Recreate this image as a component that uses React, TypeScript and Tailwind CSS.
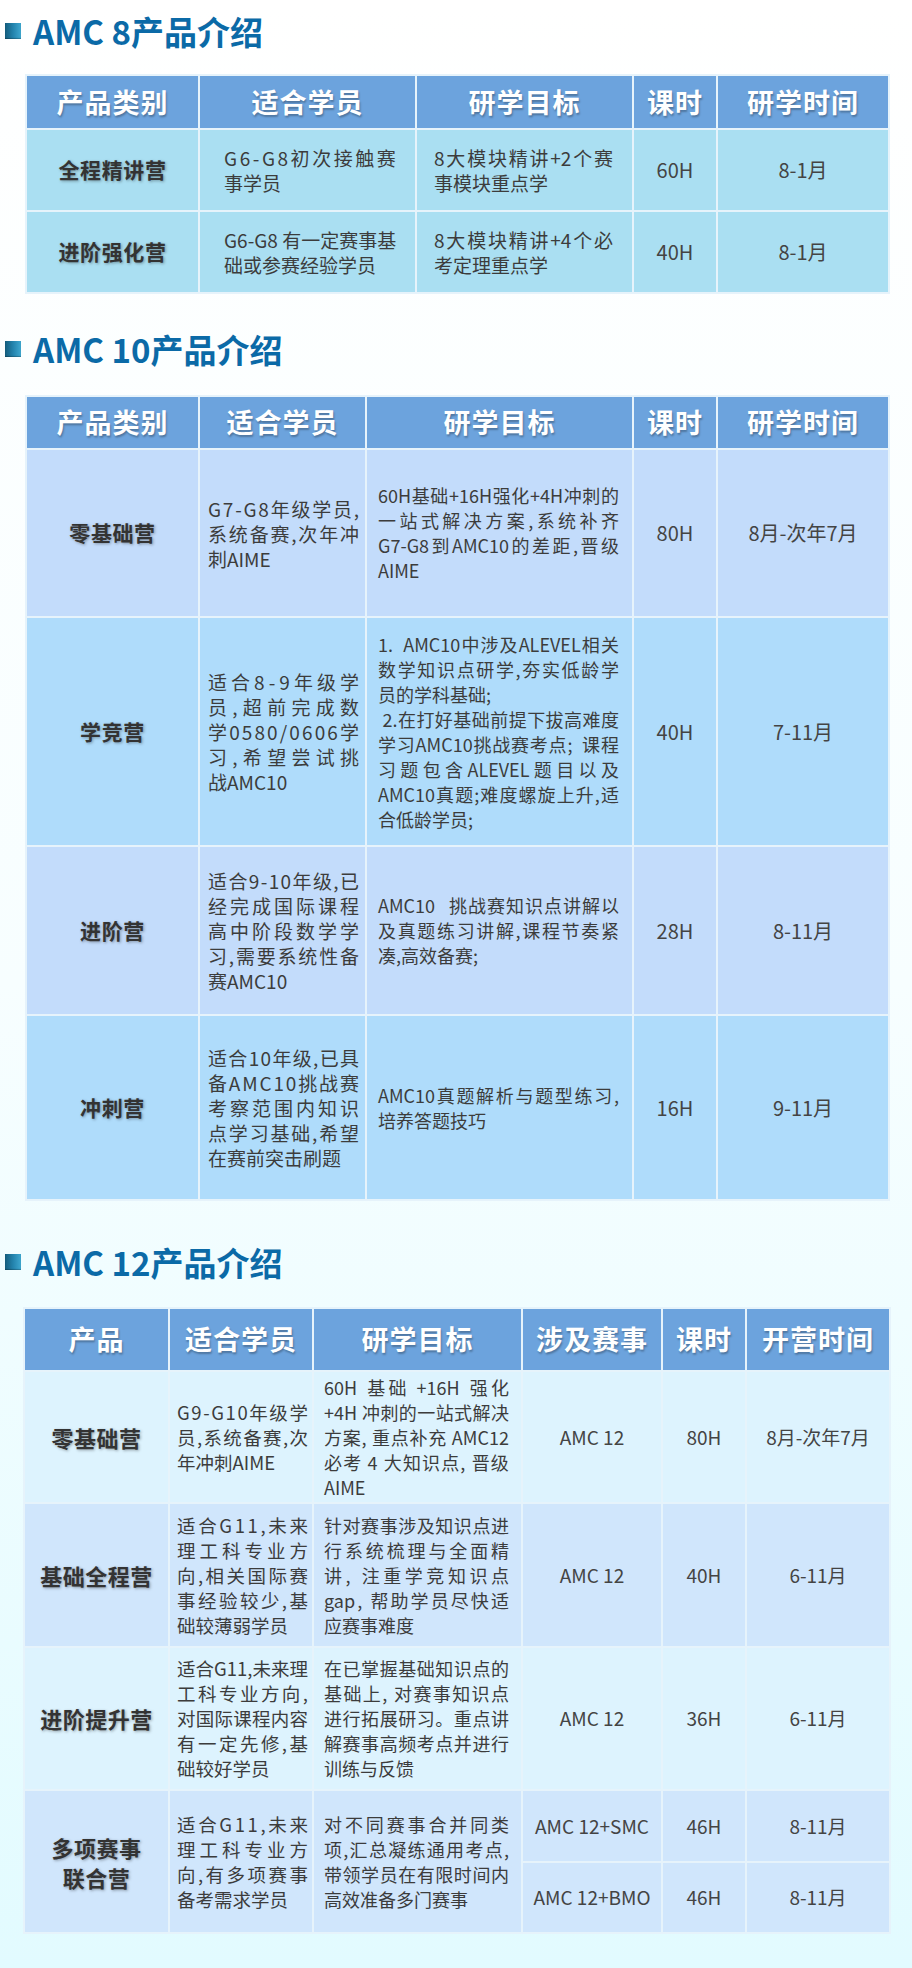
import React from 'react';

type Mode = 'char' | 'word' | 'none';

// split a line into pieces that get spread over the line width
const splitTokens = (s: string, mode: Mode): string[] => {
    if (mode === 'char') return Array.from(s);
    return s.match(/[A-Za-z0-9.+\-\/]+|\s+|[^\sA-Za-z0-9.+\-\/]/g) ?? [];
};

const Line: React.FC<{ text: string; w: string; mode: Mode }> = ({ text, w, mode }) => {
    if (mode === 'none') return <div className="whitespace-pre">{text}</div>;
    return (
        <div className={`flex justify-between ${w}`}>
            {splitTokens(text, mode).map((t, i) => (
                <span key={i}>{t.replace(/ /g, '\u00a0')}</span>
            ))}
        </div>
    );
};

// every line but the last is spread; a leading ^ keeps a line ragged
const TextBlock: React.FC<{ lines: string[]; w: string; mode: Mode }> = ({ lines, w, mode }) => (
    <div>
        {lines.map((l, i) => {
            const plain = l.startsWith('^') || i === lines.length - 1;
            return <Line key={i} text={l.replace(/^\^/, '')} w={w} mode={plain ? 'none' : mode} />;
        })}
    </div>
);

const Title: React.FC<{ children: React.ReactNode; className: string }> = ({ children, className }) => (
    <div className={`flex items-center h-10 pl-[5px] ${className}`}>
        <span className="w-4 h-4 bg-gradient-to-r from-[#155d7d] via-[#2383ad] to-[#3fa8d0] shadow-[inset_0_-1px_1px_rgba(0,0,0,0.25)]" />
        <h2 className="ml-3 text-[33px] leading-10 font-bold text-[#0b6aa7]">{children}</h2>
    </div>
);

const th = 'border-2 border-[#e6f3fb] bg-[#6ca3dd] text-white font-bold text-center align-middle [text-shadow:1px_2px_2px_rgba(0,0,0,0.28)]';
const td = 'border-2 border-[#e6f3fb] align-middle';
const labelCls = 'text-center font-bold text-[#333] [text-shadow:1px_1px_3px_rgba(0,0,0,0.35)]';
const bodyCls = 'text-left text-[#3c3c3c] leading-[25px]';
const numCls = 'text-center text-[#444]';

interface Row {
    label: string[];
    c2: string[];
    c3: string[];
    hours: string;
    time: string;
    h: string;
    bg: string;
}

const amc8: Row[] = [
    { label: ['全程精讲营'], c2: ['G6-G8初次接触赛', '事学员'], c3: ['8大模块精讲+2个赛', '事模块重点学'], hours: '60H', time: '8-1月', h: 'h-[82px]', bg: 'bg-[#aadff2]' },
    { label: ['进阶强化营'], c2: ['G6-G8 有一定赛事基', '础或参赛经验学员'], c3: ['8大模块精讲+4个必', '考定理重点学'], hours: '40H', time: '8-1月', h: 'h-[82px]', bg: 'bg-[#aadff2]' },
];

const amc10: Row[] = [
    {
        label: ['零基础营'],
        c2: ['G7-G8年级学员,', '系统备赛,次年冲', '刺AIME'],
        c3: ['60H基础+16H强化+4H冲刺的', '一站式解决方案,系统补齐', 'G7-G8到AMC10的差距,晋级', 'AIME'],
        hours: '80H', time: '8月-次年7月', h: 'h-[168px]', bg: 'bg-[#c3dcfb]',
    },
    {
        label: ['学竞营'],
        c2: ['适合8-9年级学', '员,超前完成数', '学0580/0606学', '习,希望尝试挑', '战AMC10'],
        c3: ['1.  AMC10中涉及ALEVEL相关', '数学知识点研学,夯实低龄学', '^员的学科基础;', ' 2.在打好基础前提下拔高难度', '学习AMC10挑战赛考点;  课程', '习题包含ALEVEL题目以及', 'AMC10真题;难度螺旋上升,适', '合低龄学员;'],
        hours: '40H', time: '7-11月', h: 'h-[229px]', bg: 'bg-[#afdcfb]',
    },
    {
        label: ['进阶营'],
        c2: ['适合9-10年级,已', '经完成国际课程', '高中阶段数学学', '习,需要系统性备', '赛AMC10'],
        c3: ['AMC10   挑战赛知识点讲解以', '及真题练习讲解,课程节奏紧', '凑,高效备赛;'],
        hours: '28H', time: '8-11月', h: 'h-[169px]', bg: 'bg-[#c3dcfb]',
    },
    {
        label: ['冲刺营'],
        c2: ['适合10年级,已具', '备AMC10挑战赛', '考察范围内知识', '点学习基础,希望', '在赛前突击刷题'],
        c3: ['AMC10真题解析与题型练习,', '培养答题技巧'],
        hours: '16H', time: '9-11月', h: 'h-[185px]', bg: 'bg-[#afdcfb]',
    },
];

const amc12: Row[] = [
    {
        label: ['零基础营'],
        c2: ['G9-G10年级学', '员,系统备赛,次', '年冲刺AIME'],
        c3: ['60H 基础 +16H 强化', '+4H 冲刺的一站式解决', '方案, 重点补充 AMC12', '必考 4 大知识点, 晋级', 'AIME'],
        hours: '80H', time: '8月-次年7月', h: 'h-[132px]', bg: 'bg-[#ddf3fe]',
    },
    {
        label: ['基础全程营'],
        c2: ['适合G11,未来', '理工科专业方', '向,相关国际赛', '事经验较少,基', '础较薄弱学员'],
        c3: ['针对赛事涉及知识点进', '行系统梳理与全面精', '讲, 注重学竞知识点', 'gap, 帮助学员尽快适', '应赛事难度'],
        hours: '40H', time: '6-11月', h: 'h-[144px]', bg: 'bg-[#d0e6fc]',
    },
    {
        label: ['进阶提升营'],
        c2: ['适合G11,未来理', '工科专业方向,', '对国际课程内容', '有一定先修,基', '础较好学员'],
        c3: ['在已掌握基础知识点的', '基础上, 对赛事知识点', '进行拓展研习。重点讲', '解赛事高频考点并进行', '训练与反馈'],
        hours: '36H', time: '6-11月', h: 'h-[143px]', bg: 'bg-[#ddf3fe]',
    },
];

const App: React.FC = () => {
    return (
        <div className="w-full min-h-[1968px] pt-[11px] pb-[34px] bg-gradient-to-b from-white via-[#f7feff] to-[#e2fbff] font-['Noto_Sans_CJK_SC','Noto_Sans',sans-serif]">
            <Title className="">AMC 8产品介绍</Title>
            <table className="ml-[25px] mt-[23px] w-[863px] table-fixed border-collapse">
                <colgroup>
                    <col className="w-[173px]" />
                    <col className="w-[217px]" />
                    <col className="w-[217px]" />
                    <col className="w-[84px]" />
                    <col className="w-[172px]" />
                </colgroup>
                <thead>
                    <tr className="h-[54px] text-[27px] tracking-[1px]">
                        <th className={th}>产品类别</th>
                        <th className={th}>适合学员</th>
                        <th className={th}>研学目标</th>
                        <th className={th}>课时</th>
                        <th className={th}>研学时间</th>
                    </tr>
                </thead>
                <tbody>
                    {amc8.map(r => (
                        <tr key={r.label[0]} className={`${r.h} ${r.bg}`}>
                            <td className={`${td} ${labelCls} text-[21px] tracking-[0.6px]`}>{r.label[0]}</td>
                            <td className={`${td} ${bodyCls} text-[19px] pl-[24px]`}>
                                <TextBlock lines={r.c2} w="w-[172px]" mode="char" />
                            </td>
                            <td className={`${td} ${bodyCls} text-[19px] pl-[17px]`}>
                                <TextBlock lines={r.c3} w="w-[179px]" mode="word" />
                            </td>
                            <td className={`${td} ${numCls} text-[20px]`}>{r.hours}</td>
                            <td className={`${td} ${numCls} text-[20px]`}>{r.time}</td>
                        </tr>
                    ))}
                </tbody>
            </table>

            <Title className="mt-[35px]">AMC 10产品介绍</Title>
            <table className="ml-[25px] mt-[26px] w-[863px] table-fixed border-collapse">
                <colgroup>
                    <col className="w-[173px]" />
                    <col className="w-[167px]" />
                    <col className="w-[267px]" />
                    <col className="w-[84px]" />
                    <col className="w-[172px]" />
                </colgroup>
                <thead>
                    <tr className="h-[53px] text-[27px] tracking-[1px]">
                        <th className={th}>产品类别</th>
                        <th className={th}>适合学员</th>
                        <th className={th}>研学目标</th>
                        <th className={th}>课时</th>
                        <th className={th}>研学时间</th>
                    </tr>
                </thead>
                <tbody>
                    {amc10.map(r => (
                        <tr key={r.label[0]} className={`${r.h} ${r.bg}`}>
                            <td className={`${td} ${labelCls} text-[21px] tracking-[0.6px]`}>{r.label[0]}</td>
                            <td className={`${td} ${bodyCls} text-[19px] pl-[8px]`}>
                                <TextBlock lines={r.c2} w="w-[151px]" mode="char" />
                            </td>
                            <td className={`${td} ${bodyCls} text-[18px] pl-[11px]`}>
                                <TextBlock lines={r.c3} w="w-[241px]" mode="word" />
                            </td>
                            <td className={`${td} ${numCls} text-[20px]`}>{r.hours}</td>
                            <td className={`${td} ${numCls} text-[20px]`}>{r.time}</td>
                        </tr>
                    ))}
                </tbody>
            </table>

            <Title className="mt-[41px]">AMC 12产品介绍</Title>
            <table className="ml-[23px] mt-[25px] w-[866px] table-fixed border-collapse">
                <colgroup>
                    <col className="w-[145px]" />
                    <col className="w-[144px]" />
                    <col className="w-[209px]" />
                    <col className="w-[140px]" />
                    <col className="w-[84px]" />
                    <col className="w-[144px]" />
                </colgroup>
                <thead>
                    <tr className="h-[63px] text-[27px] tracking-[1px]">
                        <th className={th}>产品</th>
                        <th className={th}>适合学员</th>
                        <th className={th}>研学目标</th>
                        <th className={th}>涉及赛事</th>
                        <th className={th}>课时</th>
                        <th className={th}>开营时间</th>
                    </tr>
                </thead>
                <tbody>
                    {amc12.map(r => (
                        <tr key={r.label[0]} className={`${r.h} ${r.bg}`}>
                            <td className={`${td} ${labelCls} text-[22px] tracking-[0.5px]`}>{r.label[0]}</td>
                            <td className={`${td} ${bodyCls} text-[18.5px] pl-[7px]`}>
                                <TextBlock lines={r.c2} w="w-[131px]" mode="char" />
                            </td>
                            <td className={`${td} ${bodyCls} text-[18px] pl-[10px]`}>
                                <TextBlock lines={r.c3} w="w-[185px]" mode="word" />
                            </td>
                            <td className={`${td} ${numCls} text-[19px]`}>AMC 12</td>
                            <td className={`${td} ${numCls} text-[19px]`}>{r.hours}</td>
                            <td className={`${td} ${numCls} text-[19px]`}>{r.time}</td>
                        </tr>
                    ))}
                    <tr className="h-[72px] bg-[#d0e6fc]">
                        <td rowSpan={2} className={`${td} ${labelCls} text-[22px] tracking-[0.5px] leading-[30px]`}>
                            <div>多项赛事</div>
                            <div>联合营</div>
                        </td>
                        <td rowSpan={2} className={`${td} ${bodyCls} text-[18.5px] pl-[7px]`}>
                            <TextBlock lines={['适合G11,未来', '理工科专业方', '向,有多项赛事', '备考需求学员']} w="w-[131px]" mode="char" />
                        </td>
                        <td rowSpan={2} className={`${td} ${bodyCls} text-[18px] pl-[10px]`}>
                            <TextBlock lines={['对不同赛事合并同类', '项,汇总凝练通用考点,', '带领学员在有限时间内', '高效准备多门赛事']} w="w-[185px]" mode="word" />
                        </td>
                        <td className={`${td} ${numCls} text-[19px]`}>AMC 12+SMC</td>
                        <td className={`${td} ${numCls} text-[19px]`}>46H</td>
                        <td className={`${td} ${numCls} text-[19px]`}>8-11月</td>
                    </tr>
                    <tr className="h-[71px] bg-[#d0e6fc]">
                        <td className={`${td} ${numCls} text-[19px]`}>AMC 12+BMO</td>
                        <td className={`${td} ${numCls} text-[19px]`}>46H</td>
                        <td className={`${td} ${numCls} text-[19px]`}>8-11月</td>
                    </tr>
                </tbody>
            </table>
        </div>
    );
};

export default App;
